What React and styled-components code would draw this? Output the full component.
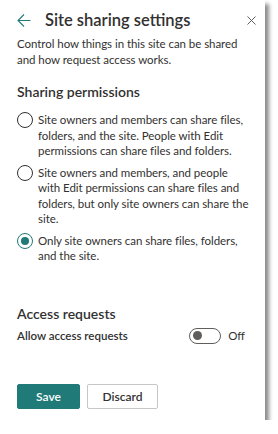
import styled, { createGlobalStyle } from 'styled-components';

const Global = createGlobalStyle`
  html, body {
    margin: 0;
    padding: 0;
    background: #ffffff;
  }
  body {
    font-family: Lato, "Open Sans", sans-serif;
    color: #323130;
  }
`;

const Panel = styled.div`
  width: 265px;
  height: 420px;
  background: #ffffff;
  box-shadow: 4px 4px 4px rgba(0, 0, 0, 0.45);
  padding: 0 16px 0 17px;
  box-sizing: border-box;
  display: flex;
  flex-direction: column;
`;

const Header = styled.div`
  display: flex;
  align-items: center;
  height: 26px;
  margin-top: 7px;
  margin-right: -7px;
`;

const IconButton = styled.button`
  border: none;
  background: none;
  padding: 0;
  display: flex;
  align-items: center;
  justify-content: center;
  cursor: pointer;
  color: ${(props) => props.$color || '#605e5c'};
`;

const Title = styled.h2`
  flex: 1;
  margin: 0 0 0 14px;
  font-size: 16.5px;
  font-weight: 600;
  line-height: 22px;
`;

const Description = styled.p`
  margin: 3px 0 0;
  font-size: 11.5px;
  letter-spacing: -0.05px;
  line-height: 16px;
`;

const SectionTitle = styled.h3`
  margin: ${(props) => props.$top || '15px'} 0 0;
  font-size: 14px;
  font-weight: 600;
  line-height: 18px;
`;

const RadioList = styled.div`
  display: flex;
  flex-direction: column;
  gap: 6px;
  margin-top: 11px;
`;

const Option = styled.label`
  display: flex;
  align-items: flex-start;
  gap: 5px;
  font-size: 11.5px;
  letter-spacing: -0.05px;
  line-height: 15.5px;
  cursor: pointer;
`;

const Circle = styled.span`
  flex: none;
  width: 16px;
  height: 16px;
  border-radius: 50%;
  border: 1px solid #323130;
  box-sizing: border-box;
  display: flex;
  align-items: center;
  justify-content: center;

  ${(props) =>
    props.$checked &&
    `
    border-color: #1f7a78;
    &::after {
      content: '';
      width: 8px;
      height: 8px;
      border-radius: 50%;
      background: #1f7a78;
    }
  `}
`;

const Row = styled.div`
  display: flex;
  align-items: center;
  margin-top: 5px;
`;

const Label = styled.span`
  flex: 1;
  font-size: 11.5px;
  font-weight: 600;
`;

const Toggle = styled.span`
  width: 32px;
  height: 16px;
  border: 1px solid #605e5c;
  border-radius: 10px;
  box-sizing: border-box;
  display: flex;
  align-items: center;
  padding-left: 3px;

  &::after {
    content: '';
    width: 9px;
    height: 9px;
    border-radius: 50%;
    background: #605e5c;
  }
`;

const ToggleText = styled.span`
  font-size: 11.5px;
  margin: 0 4px 0 7px;
`;

const Buttons = styled.div`
  display: flex;
  gap: 7px;
  margin-top: 40px;
`;

const Button = styled.button`
  height: 25px;
  width: ${(props) => (props.$primary ? '63px' : '71px')};
  padding: 0;
  border-radius: 2px;
  font-family: inherit;
  font-size: 12px;
  font-weight: 600;
  border: 1px solid ${(props) => (props.$primary ? '#1f7a78' : '#c8c6c4')};
  background: ${(props) => (props.$primary ? '#1f7a78' : '#ffffff')};
  color: ${(props) => (props.$primary ? '#ffffff' : '#323130')};
`;

const options = [
  'Site owners and members can share files, folders, and the site. People with Edit permissions can share files and folders.',
  'Site owners and members, and people with Edit permissions can share files and folders, but only site owners can share the site.',
  'Only site owners can share files, folders, and the site.',
];

export default function App() {
  return (
    <>
      <Global />
      <Panel>
        <Header>
          <IconButton $color="#1f7a78" aria-label="Back">
            <svg width="14" height="13" viewBox="0 0 14 13" fill="none" stroke="currentColor" strokeWidth="1.1">
              <path d="M13.5 6.5H1M7 0.5L1 6.5l6 6" />
            </svg>
          </IconButton>
          <Title>Site sharing settings</Title>
          <IconButton aria-label="Close">
            <svg width="9" height="9" viewBox="0 0 9 9" stroke="currentColor" strokeWidth="1">
              <path d="M0.5 0.5l8 8M8.5 0.5l-8 8" />
            </svg>
          </IconButton>
        </Header>
        <Description>
          Control how things in this site can be shared and how request access works.
        </Description>
        <SectionTitle>Sharing permissions</SectionTitle>
        <RadioList>
          {options.map((text, i) => (
            <Option key={i}>
              <Circle $checked={i === 2} />
              <span>{text}</span>
            </Option>
          ))}
        </RadioList>
        <SectionTitle $top="41px">Access requests</SectionTitle>
        <Row>
          <Label>Allow access requests</Label>
          <Toggle />
          <ToggleText>Off</ToggleText>
        </Row>
        <Buttons>
          <Button $primary>Save</Button>
          <Button>Discard</Button>
        </Buttons>
      </Panel>
    </>
  );
}
